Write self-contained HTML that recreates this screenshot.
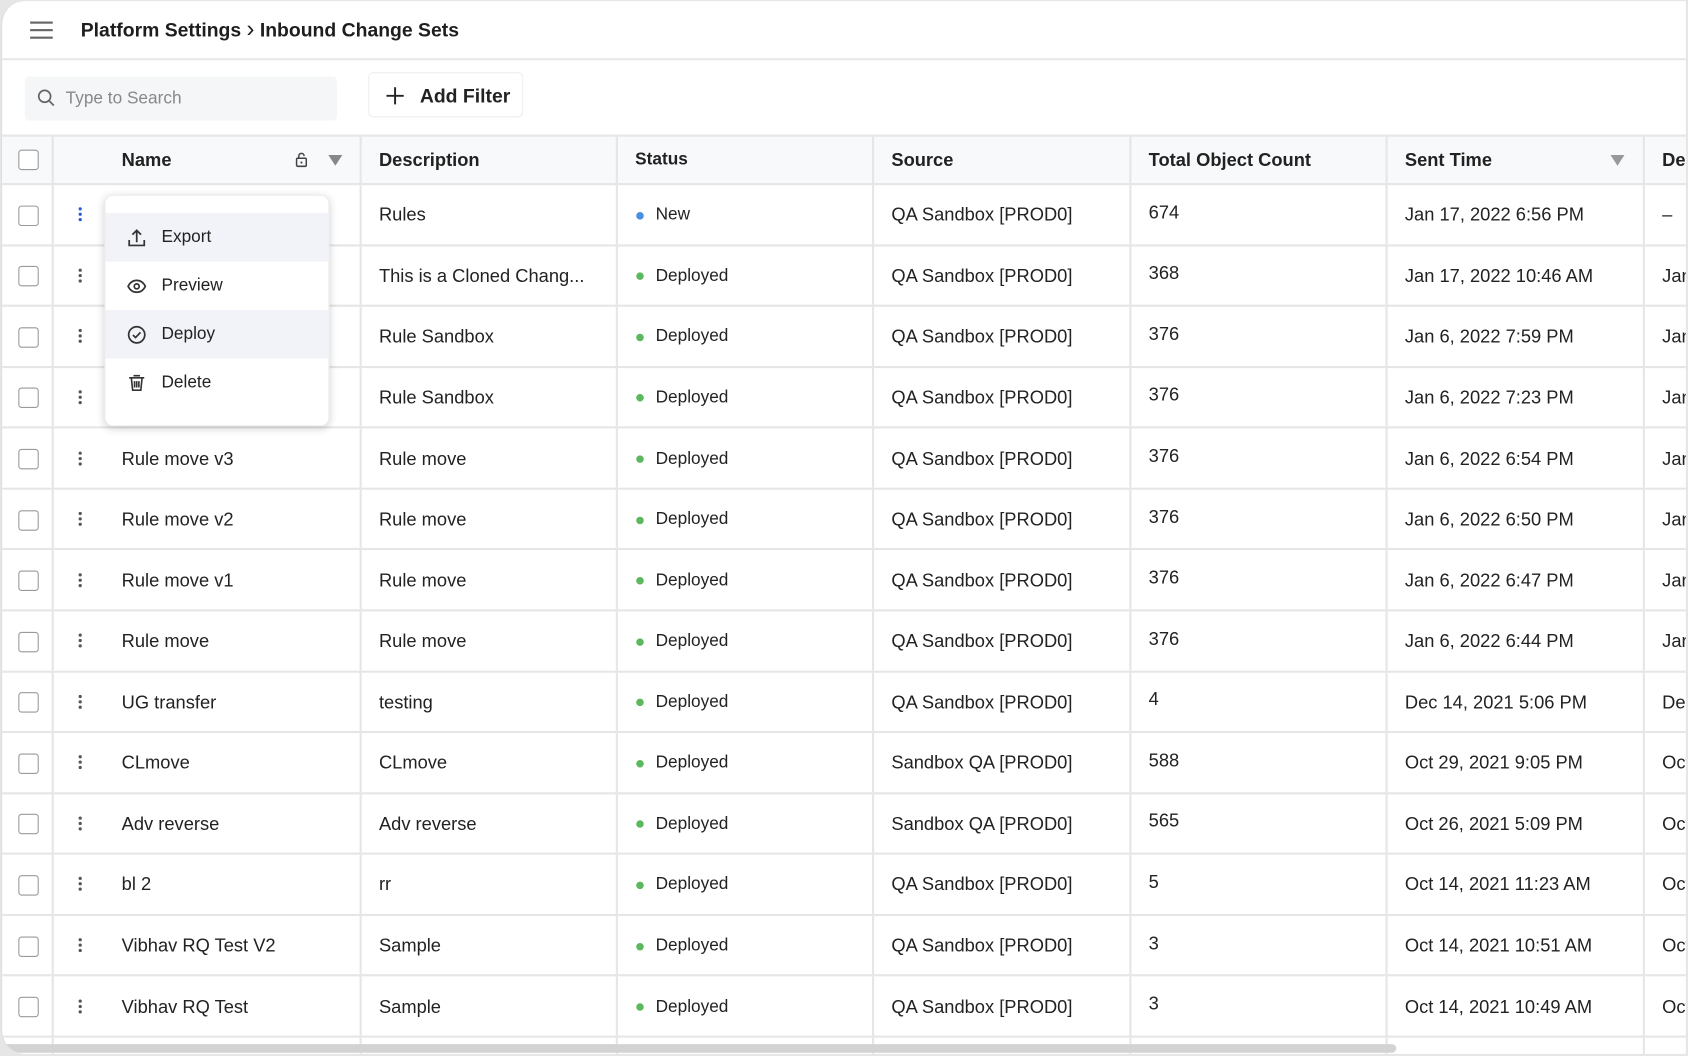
<!DOCTYPE html>
<html><head><meta charset="utf-8"><style>
*{box-sizing:border-box;margin:0;padding:0}
html,body{width:1688px;height:1056px;overflow:hidden;background:#e6e6e6;font-family:"Liberation Sans",sans-serif;color:#222}
#s{position:absolute;left:0;top:0;width:1568px;height:981px;transform:scale(1.07653,1.07645);transform-origin:0 0}
.frame{position:absolute;left:1px;top:1px;width:1565px;height:978px;background:#fff;border-radius:22px 0 0 22px;overflow:hidden;border-left:1px solid #ddd}
.hdr{position:absolute;left:0;top:0;width:100%;height:55px;border-bottom:2px solid #e8e8e8}
.title{position:absolute;left:73px;top:17px;font-size:18px;font-weight:bold;color:#1e1e1e}
.ham{position:absolute;left:26px;top:19px;width:21px}
.ham i{display:block;height:2px;background:#666;margin-bottom:5px}
.search{position:absolute;left:21px;top:70px;width:290px;height:41px;background:#f5f6f8;border-radius:4px}
.search span{position:absolute;left:38px;top:12px;font-size:16px;color:#888}
.af{position:absolute;left:340px;top:66px;width:144px;height:42px;border:1px solid #eee;border-radius:5px;font-size:18px;font-weight:bold}
.af span{position:absolute;left:47px;top:11px}
.tbl{position:absolute;left:0;top:124px;width:1600px}
.row{display:flex;height:56.57px;border-bottom:2px solid #e6e6e6}
.row.h{height:47px;background:#f8f9fa;border-top:2px solid #e6e6e6;font-weight:bold;font-size:16px}
.c{position:relative;border-right:2px solid #e6e6e6;display:flex;align-items:center;padding-left:16px;padding-top:2px;font-size:17px;white-space:nowrap;overflow:hidden}
.h .c{padding-top:0}
.c0{width:48px;padding-left:15px}.c1{width:286px;padding-left:63px}.c2{width:238px}.c3{width:238px;font-size:16px}.c4{width:239px}.c5{width:238px}.c6{width:239px}.c7{width:60px;border-right:none}
.cb{width:19px;height:19px;border:1.5px solid #999;border-radius:3px;background:#fff}
.dots{position:absolute;left:23px;top:50%;transform:translateY(-50%);width:3px}
.dots i{display:block;width:3px;height:3px;border-radius:50%;background:#555;margin:2px 0}
.dot{width:7px;height:7px;border-radius:50%;background:#5cb85c;margin-right:11px;margin-left:1px}
.num{padding-bottom:3px;padding-top:0}
.menu{position:absolute;left:95px;top:180px;width:209px;height:215px;background:#fff;border-radius:8px;box-shadow:0 2px 8px rgba(0,0,0,.18);border:1px solid #eee}
.mi{position:absolute;left:0;width:100%;height:45px;display:flex;align-items:center;font-size:16px;color:#222}
.mi.hl{background:#f1f3f8}
.mi svg{position:absolute;left:19px}
.mi span{position:absolute;left:52px}
.sb{position:absolute;left:0;top:969px;width:1295px;height:8px;background:#d3d3d3;border-radius:4px}
</style></head><body><div id="s"><div class="frame">
<div class="hdr"><div class="ham"><i></i><i></i><i></i></div><div class="title">Platform Settings <span style="font-weight:normal;font-size:22px;line-height:18px">&#x203A;</span> Inbound Change Sets</div></div>
<div class="search"><svg style="position:absolute;left:11px;top:11px" width="18" height="18" viewBox="0 0 18 18"><circle cx="7.5" cy="7.5" r="5.5" fill="none" stroke="#666" stroke-width="1.6"/><path d="M11.5 11.5L16 16" stroke="#666" stroke-width="1.6"/></svg><span>Type to Search</span></div>
<div class="af"><svg style="position:absolute;left:15px;top:12px" width="18" height="18" viewBox="0 0 18 18"><path d="M9 1v16M1 9h16" stroke="#222" stroke-width="1.8"/></svg><span>Add Filter</span></div>
<div class="tbl">
<div class="row h"><div class="c c0"><div class="cb"></div></div><div class="c c1">Name<svg style="position:absolute;left:224px" width="12" height="15" viewBox="0 0 12 15"><rect x="1.5" y="6" width="9" height="7.5" rx="1" fill="none" stroke="#444" stroke-width="1.4"/><path d="M3.5 6V4a2.5 2.5 0 0 1 5 0" fill="none" stroke="#444" stroke-width="1.4"/><circle cx="6" cy="10" r="1" fill="#444"/></svg><svg style="position:absolute;left:255px" width="13" height="10" viewBox="0 0 13 10"><path d="M0 0h13L6.5 10z" fill="#888"/></svg></div><div class="c c2">Description</div><div class="c c3">Status</div><div class="c c4">Source</div><div class="c c5">Total Object Count</div><div class="c c6">Sent Time<svg style="position:absolute;left:207px" width="13" height="10" viewBox="0 0 13 10"><path d="M0 0h13L6.5 10z" fill="#999"/></svg></div><div class="c c7">Dep</div></div>

<div class="row"><div class="c c0"><div class="cb"></div></div><div class="c c1"><div class="dots"><i style="background:#2a5bd7"></i><i style="background:#2a5bd7"></i><i style="background:#2a5bd7"></i></div></div><div class="c c2">Rules</div><div class="c c3"><div class="dot" style="background:#4a90e2"></div>New</div><div class="c c4">QA Sandbox [PROD0]</div><div class="c c5 num">674</div><div class="c c6">Jan 17, 2022 6:56 PM</div><div class="c c7">–</div></div>
<div class="row"><div class="c c0"><div class="cb"></div></div><div class="c c1"><div class="dots"><i></i><i></i><i></i></div></div><div class="c c2">This is a Cloned Chang...</div><div class="c c3"><div class="dot"></div>Deployed</div><div class="c c4">QA Sandbox [PROD0]</div><div class="c c5 num">368</div><div class="c c6">Jan 17, 2022 10:46 AM</div><div class="c c7">Jan</div></div>
<div class="row"><div class="c c0"><div class="cb"></div></div><div class="c c1"><div class="dots"><i></i><i></i><i></i></div></div><div class="c c2">Rule Sandbox</div><div class="c c3"><div class="dot"></div>Deployed</div><div class="c c4">QA Sandbox [PROD0]</div><div class="c c5 num">376</div><div class="c c6">Jan 6, 2022 7:59 PM</div><div class="c c7">Jan</div></div>
<div class="row"><div class="c c0"><div class="cb"></div></div><div class="c c1"><div class="dots"><i></i><i></i><i></i></div></div><div class="c c2">Rule Sandbox</div><div class="c c3"><div class="dot"></div>Deployed</div><div class="c c4">QA Sandbox [PROD0]</div><div class="c c5 num">376</div><div class="c c6">Jan 6, 2022 7:23 PM</div><div class="c c7">Jan</div></div>
<div class="row"><div class="c c0"><div class="cb"></div></div><div class="c c1"><div class="dots"><i></i><i></i><i></i></div>Rule move v3</div><div class="c c2">Rule move</div><div class="c c3"><div class="dot"></div>Deployed</div><div class="c c4">QA Sandbox [PROD0]</div><div class="c c5 num">376</div><div class="c c6">Jan 6, 2022 6:54 PM</div><div class="c c7">Jan</div></div>
<div class="row"><div class="c c0"><div class="cb"></div></div><div class="c c1"><div class="dots"><i></i><i></i><i></i></div>Rule move v2</div><div class="c c2">Rule move</div><div class="c c3"><div class="dot"></div>Deployed</div><div class="c c4">QA Sandbox [PROD0]</div><div class="c c5 num">376</div><div class="c c6">Jan 6, 2022 6:50 PM</div><div class="c c7">Jan</div></div>
<div class="row"><div class="c c0"><div class="cb"></div></div><div class="c c1"><div class="dots"><i></i><i></i><i></i></div>Rule move v1</div><div class="c c2">Rule move</div><div class="c c3"><div class="dot"></div>Deployed</div><div class="c c4">QA Sandbox [PROD0]</div><div class="c c5 num">376</div><div class="c c6">Jan 6, 2022 6:47 PM</div><div class="c c7">Jan</div></div>
<div class="row"><div class="c c0"><div class="cb"></div></div><div class="c c1"><div class="dots"><i></i><i></i><i></i></div>Rule move</div><div class="c c2">Rule move</div><div class="c c3"><div class="dot"></div>Deployed</div><div class="c c4">QA Sandbox [PROD0]</div><div class="c c5 num">376</div><div class="c c6">Jan 6, 2022 6:44 PM</div><div class="c c7">Jan</div></div>
<div class="row"><div class="c c0"><div class="cb"></div></div><div class="c c1"><div class="dots"><i></i><i></i><i></i></div>UG transfer</div><div class="c c2">testing</div><div class="c c3"><div class="dot"></div>Deployed</div><div class="c c4">QA Sandbox [PROD0]</div><div class="c c5 num">4</div><div class="c c6">Dec 14, 2021 5:06 PM</div><div class="c c7">Dec</div></div>
<div class="row"><div class="c c0"><div class="cb"></div></div><div class="c c1"><div class="dots"><i></i><i></i><i></i></div>CLmove</div><div class="c c2">CLmove</div><div class="c c3"><div class="dot"></div>Deployed</div><div class="c c4">Sandbox QA [PROD0]</div><div class="c c5 num">588</div><div class="c c6">Oct 29, 2021 9:05 PM</div><div class="c c7">Oct</div></div>
<div class="row"><div class="c c0"><div class="cb"></div></div><div class="c c1"><div class="dots"><i></i><i></i><i></i></div>Adv reverse</div><div class="c c2">Adv reverse</div><div class="c c3"><div class="dot"></div>Deployed</div><div class="c c4">Sandbox QA [PROD0]</div><div class="c c5 num">565</div><div class="c c6">Oct 26, 2021 5:09 PM</div><div class="c c7">Oct</div></div>
<div class="row"><div class="c c0"><div class="cb"></div></div><div class="c c1"><div class="dots"><i></i><i></i><i></i></div>bl 2</div><div class="c c2">rr</div><div class="c c3"><div class="dot"></div>Deployed</div><div class="c c4">QA Sandbox [PROD0]</div><div class="c c5 num">5</div><div class="c c6">Oct 14, 2021 11:23 AM</div><div class="c c7">Oct</div></div>
<div class="row"><div class="c c0"><div class="cb"></div></div><div class="c c1"><div class="dots"><i></i><i></i><i></i></div>Vibhav RQ Test V2</div><div class="c c2">Sample</div><div class="c c3"><div class="dot"></div>Deployed</div><div class="c c4">QA Sandbox [PROD0]</div><div class="c c5 num">3</div><div class="c c6">Oct 14, 2021 10:51 AM</div><div class="c c7">Oct</div></div>
<div class="row"><div class="c c0"><div class="cb"></div></div><div class="c c1"><div class="dots"><i></i><i></i><i></i></div>Vibhav RQ Test</div><div class="c c2">Sample</div><div class="c c3"><div class="dot"></div>Deployed</div><div class="c c4">QA Sandbox [PROD0]</div><div class="c c5 num">3</div><div class="c c6">Oct 14, 2021 10:49 AM</div><div class="c c7">Oct</div></div>
<div class="row"><div class="c c0"></div><div class="c c1"></div><div class="c c2"></div><div class="c c3"></div><div class="c c4"></div><div class="c c5"></div><div class="c c6"></div><div class="c c7"></div></div>
</div>
<div class="menu">
<div class="mi hl" style="top:16px"><svg width="20" height="20" viewBox="0 0 20 20"><path d="M10 14V3M6 7l4-4 4 4M3 12v5h14v-5" fill="none" stroke="#333" stroke-width="1.6"/></svg><span>Export</span></div>
<div class="mi" style="top:61px"><svg width="20" height="20" viewBox="0 0 20 20"><path d="M2 10c2-4 5-5.5 8-5.5s6 1.5 8 5.5c-2 4-5 5.5-8 5.5S4 14 2 10z" fill="none" stroke="#333" stroke-width="1.6"/><circle cx="10" cy="10" r="2.3" fill="none" stroke="#333" stroke-width="1.6"/></svg><span>Preview</span></div>
<div class="mi hl" style="top:106px"><svg width="20" height="20" viewBox="0 0 20 20"><circle cx="10" cy="10" r="7.5" fill="none" stroke="#333" stroke-width="1.6"/><path d="M6.5 10.2l2.4 2.4 4.6-4.8" fill="none" stroke="#333" stroke-width="1.6"/></svg><span>Deploy</span></div>
<div class="mi" style="top:151px"><svg width="20" height="20" viewBox="0 0 20 20"><path d="M3 5h14M5 5l1.2 11.5h7.6L15 5M7 3h6M8 8v6M10 8v6M12 8v6" fill="none" stroke="#333" stroke-width="1.5"/></svg><span>Delete</span></div>
</div>
<div class="sb"></div>
</div></div></body></html>
